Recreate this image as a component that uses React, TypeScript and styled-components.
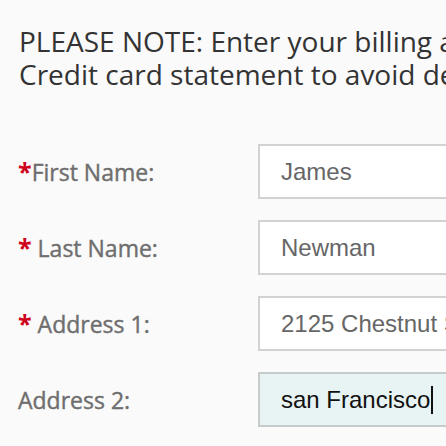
import styled, { createGlobalStyle } from 'styled-components';

const GlobalStyle = createGlobalStyle`
  html, body {
    margin: 0;
    padding: 0;
    background: #fafafa;
  }
`;

type Field = {
  label: string;
  required: boolean;
  spaced: boolean;
  value: string;
  focused?: boolean;
};

const fields: Field[] = [
  { label: 'First Name:', required: true, spaced: false, value: 'James' },
  { label: 'Last Name:', required: true, spaced: true, value: 'Newman' },
  { label: 'Address 1:', required: true, spaced: true, value: '2125 Chestnut St' },
  { label: 'Address 2:', required: false, spaced: false, value: 'san Francisco', focused: true },
];

const App = () => {
  return (
    <Page>
      <GlobalStyle />
      <Note>
        <Line>PLEASE NOTE: Enter your billing address as it appears on your</Line>
        <Line>Credit card statement to avoid delays</Line>
      </Note>
      <Form>
        {fields.map((f) => (
          <Row key={f.label}>
            <Label>
              {f.required && <Star>*</Star>}
              {f.spaced ? ' ' : ''}
              {f.label}
            </Label>
            <Input focused={!!f.focused}>
              {f.value}
              {f.focused && <Caret />}
            </Input>
          </Row>
        ))}
      </Form>
    </Page>
  );
};

const Page = styled.div`
  width: 446px;
  height: 446px;
  overflow: hidden;
  padding: 25px 0 0 18px;
  box-sizing: border-box;
`;

const Note = styled.div`
  font-family: 'Open Sans', sans-serif;
  font-size: 28px;
  line-height: 33px;
  color: #333;
  padding-left: 1px;
`;

const Line = styled.div`
  white-space: nowrap;
`;

const Form = styled.div`
  margin-top: 53px;
  display: flex;
  flex-direction: column;
  gap: 21px;
`;

const Row = styled.div`
  display: grid;
  grid-template-columns: 240px 320px;
  align-items: center;
`;

const Label = styled.div`
  font-family: 'Open Sans', sans-serif;
  font-size: 23px;
  line-height: 30px;
  color: #6e6e6e;
  -webkit-text-stroke: 0.4px #6e6e6e;
  white-space: pre;
`;

const Star = styled.span`
  color: #d0021b;
  -webkit-text-stroke: 0;
  font-weight: 700;
  font-size: 25px;
  line-height: 0;
`;

const Input = styled.div<{ focused: boolean }>`
  height: 55px;
  box-sizing: border-box;
  border: 2px solid ${(p) => (p.focused ? '#c6cccc' : '#d2d2d2')};
  background: ${(p) => (p.focused ? '#e8f3f3' : '#fff')};
  display: flex;
  align-items: center;
  padding-left: 21px;
  font-family: 'Liberation Sans', Arial, sans-serif;
  font-size: 24px;
  color: ${(p) => (p.focused ? '#111' : '#666')};
  white-space: nowrap;
`;

const Caret = styled.span`
  display: inline-block;
  width: 2px;
  height: 28px;
  background: #111;
  margin-left: 1px;
`;

export default App;
